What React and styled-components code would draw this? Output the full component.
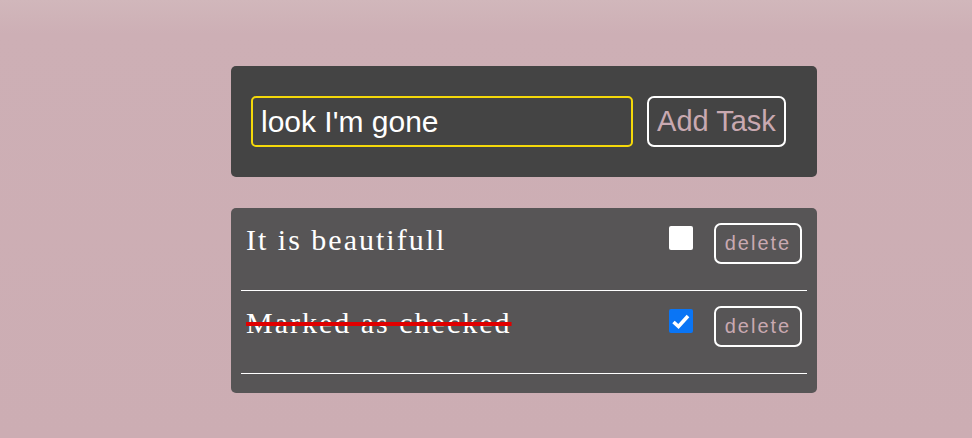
import React, { useState } from "react";
import styled, { createGlobalStyle } from "styled-components";

const GlobalStyle = createGlobalStyle`
  html, body {
    margin: 0;
    padding: 0;
  }
  body {
    min-height: 100vh;
    background: linear-gradient(to bottom, #d1b7bb 0px, #cdafb5 34px, #ccadb3 100%);
    font-family: "Liberation Sans", Arial, sans-serif;
  }
`;

function App() {
  const [input, setInput] = useState("look I'm gone");
  const [todos, setTodos] = useState([
    { id: 1, text: "It is beautifull", done: false },
    { id: 2, text: "Marked as checked", done: true },
  ]);

  const toggle = (id) => {
    setTodos(todos.map((t) => (t.id === id ? { ...t, done: !t.done } : t)));
  };

  const remove = (id) => {
    setTodos(todos.filter((t) => t.id !== id));
  };

  const addTodo = (e) => {
    e.preventDefault();
    if (!input.trim()) return;
    setTodos([...todos, { id: Date.now(), text: input, done: false }]);
    setInput("");
  };

  return (
    <>
      <GlobalStyle />
      <StWrapper>
        <StForm onSubmit={addTodo}>
          <StInput
            type="text"
            value={input}
            onChange={(e) => setInput(e.target.value)}
          />
          <StAddButton type="submit">Add Task</StAddButton>
        </StForm>

        <StList>
          {todos.map((todo) => (
            <StRow key={todo.id}>
              <StText $done={todo.done}>{todo.text}</StText>
              <StCheck $checked={todo.done} onClick={() => toggle(todo.id)}>
                {todo.done && (
                  <svg width="24" height="24" viewBox="0 0 24 24">
                    <path
                      d="M4.5 13 L9.5 17.5 L19 7"
                      fill="none"
                      stroke="#fff"
                      strokeWidth="3.6"
                    />
                  </svg>
                )}
              </StCheck>
              <StDeleteButton onClick={() => remove(todo.id)}>
                delete
              </StDeleteButton>
            </StRow>
          ))}
        </StList>
      </StWrapper>
    </>
  );
}

export default App;

const StWrapper = styled.div`
  width: 586px;
  margin: 0 0 0 231px;
  padding-top: 66px;
`;

const StForm = styled.form`
  display: flex;
  align-items: center;
  gap: 14px;
  padding: 30px 31px 30px 20px;
  background-color: #444444;
  border-radius: 5px;
`;

const StInput = styled.input`
  flex: 1;
  min-width: 0;
  height: 51px;
  box-sizing: border-box;
  padding: 0 8px;
  border: 2px solid #f5d90a;
  border-radius: 5px;
  background: transparent;
  color: #fff;
  font-family: "Liberation Sans", Arial, sans-serif;
  font-size: 30px;
  outline: none;
`;

const StAddButton = styled.button`
  width: 139px;
  height: 51px;
  box-sizing: border-box;
  padding: 0;
  border: 2px solid #fff;
  border-radius: 7px;
  background: transparent;
  color: #c9a9b1;
  font-family: "Liberation Sans", Arial, sans-serif;
  font-size: 29px;
  cursor: pointer;
`;

const StList = styled.div`
  margin-top: 31px;
  padding: 0 10px 19px;
  background-color: #575556;
  border-radius: 5px;
`;

const StRow = styled.div`
  display: flex;
  align-items: flex-start;
  padding: 15px 5px 26px;
  border-bottom: 1px solid #fff;
`;

const StText = styled.div`
  flex: 1;
  color: #fff;
  font-family: "Liberation Serif", "Times New Roman", serif;
  font-size: 30px;
  letter-spacing: 2px;
  text-decoration: ${(props) => (props.$done ? "line-through" : "none")};
  text-decoration-color: #e00000;
  text-decoration-thickness: 4px;
`;

const StCheck = styled.span`
  display: flex;
  align-items: center;
  justify-content: center;
  width: 24px;
  height: 24px;
  margin-top: 3px;
  margin-right: 21px;
  border-radius: 2px;
  background-color: ${(props) => (props.$checked ? "#0a75f5" : "#ffffff")};
  cursor: pointer;
`;

const StDeleteButton = styled.button`
  width: 88px;
  height: 41px;
  box-sizing: border-box;
  padding: 0;
  border: 2px solid #fff;
  border-radius: 7px;
  background: transparent;
  color: #c9a9b1;
  font-family: "Liberation Sans", Arial, sans-serif;
  font-size: 20px;
  letter-spacing: 2px;
  cursor: pointer;
`;
